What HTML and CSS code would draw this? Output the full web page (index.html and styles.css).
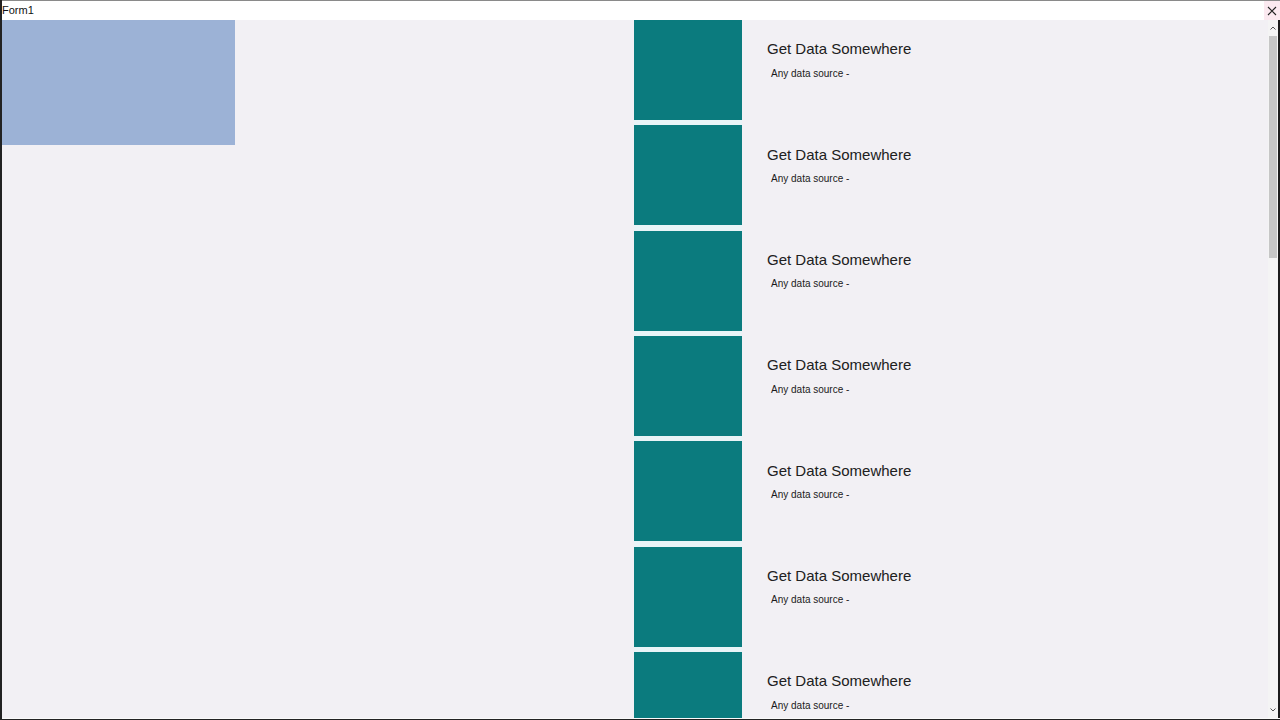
FILE: index.html
```html
<!DOCTYPE html>
<html>
<head>
<meta charset="utf-8">
<link rel="stylesheet" href="styles.css">
</head>
<body>
<div class="window">
  <div class="titlebar">
    <span class="title">Form1</span>
    <span class="close"><svg width="10" height="10" viewBox="0 0 10 10"><path d="M1 1 L9 9 M9 1 L1 9" stroke="#222" stroke-width="1.1" fill="none"/></svg></span>
  </div>
  <div class="client">
    <div class="left">
      <div class="panel"></div>
    </div>
    <div class="list">
      <div class="row"><div class="slot"><div class="tile"></div></div><div class="info"><div class="name">Get Data Somewhere</div><div class="desc">Any data source -</div></div></div>
      <div class="row"><div class="slot"><div class="tile"></div></div><div class="info"><div class="name">Get Data Somewhere</div><div class="desc">Any data source -</div></div></div>
      <div class="row"><div class="slot"><div class="tile"></div></div><div class="info"><div class="name">Get Data Somewhere</div><div class="desc">Any data source -</div></div></div>
      <div class="row"><div class="slot"><div class="tile"></div></div><div class="info"><div class="name">Get Data Somewhere</div><div class="desc">Any data source -</div></div></div>
      <div class="row"><div class="slot"><div class="tile"></div></div><div class="info"><div class="name">Get Data Somewhere</div><div class="desc">Any data source -</div></div></div>
      <div class="row"><div class="slot"><div class="tile"></div></div><div class="info"><div class="name">Get Data Somewhere</div><div class="desc">Any data source -</div></div></div>
      <div class="row"><div class="slot"><div class="tile"></div></div><div class="info"><div class="name">Get Data Somewhere</div><div class="desc">Any data source -</div></div></div>
    </div>
    <div class="scrollbar">
      <div class="arrow up"><svg width="6" height="4" viewBox="0 0 6 4"><path d="M0.5 3.5 L3 1 L5.5 3.5" stroke="#555" stroke-width="1" fill="none"/></svg></div>
      <div class="thumb"></div>
      <div class="track"></div>
      <div class="arrow down"><svg width="6" height="4" viewBox="0 0 6 4"><path d="M0.5 0.5 L3 3 L5.5 0.5" stroke="#555" stroke-width="1" fill="none"/></svg></div>
    </div>
  </div>
</div>
</body>
</html>
```

FILE: styles.css
```css
html, body {
  margin: 0;
  padding: 0;
  width: 1280px;
  height: 720px;
  overflow: hidden;
  background: #222222;
  font-family: "Liberation Sans", Arial, sans-serif;
}

.window {
  width: 1278px;
  height: 718px;
  margin-left: 2px;
  border-top: 1px solid #8a8a8a;
  display: flex;
  flex-direction: column;
  background: #f2f0f4;
  overflow: hidden;
}

.titlebar {
  height: 19px;
  flex: none;
  background: #ffffff;
  display: flex;
  align-items: center;
  justify-content: space-between;
}

.title {
  font-size: 11px;
  color: #111;
  margin-top: -1px;
}

.close {
  width: 16px;
  height: 19px;
  background: #fbe9f0;
  display: flex;
  align-items: center;
  justify-content: center;
}

.client {
  flex: 1;
  display: flex;
  overflow: hidden;
  border-bottom: 1px solid #fafafa;
}

.left {
  width: 632px;
  flex: none;
}

.panel {
  width: 233px;
  height: 125px;
  background: #9cb2d6;
}

.list {
  flex: 1;
  display: flex;
  flex-direction: column;
}

.row {
  display: flex;
  flex: none;
  height: 105.33px;
}

.slot {
  width: 108px;
  height: 105.33px;
  background: #e9f4f7;
  flex: none;
}

.tile {
  height: 100px;
  background: #0b7b7e;
}

.info {
  margin-left: 25px;
  padding-top: 20.2px;
}

.name {
  font-size: 15px;
  line-height: 18px;
  color: #202020;
}

.desc {
  font-size: 10px;
  line-height: 12px;
  color: #1a1a1a;
  margin-top: 9.5px;
  margin-left: 4px;
}

.scrollbar {
  width: 10px;
  flex: none;
  display: flex;
  flex-direction: column;
  background: #f4f4f4;
  border-right: 2px solid #1c1c1c;
}

.arrow {
  height: 16px;
  display: flex;
  align-items: center;
  justify-content: center;
  flex: none;
}

.thumb {
  height: 222px;
  margin: 0 1px;
  background: #c6c6c6;
  flex: none;
}

.track {
  flex: 1;
}
```
